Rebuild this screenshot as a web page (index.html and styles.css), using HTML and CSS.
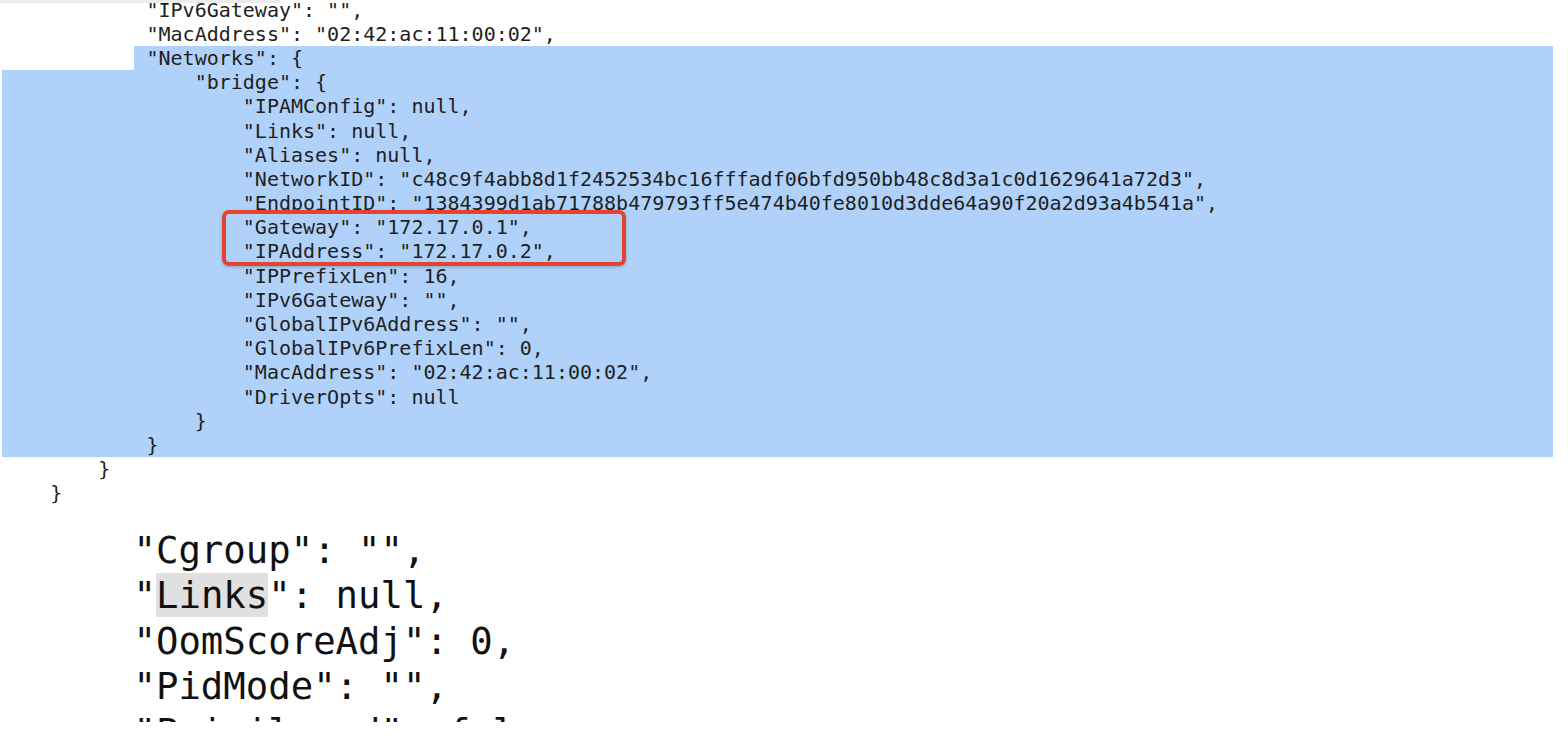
FILE: index.html
```html
<!DOCTYPE html>
<html>
<head>
<meta charset="utf-8">
<link rel="stylesheet" href="styles.css">
</head>
<body>
<div class="page">
  <div class="code-top">
    <div class="row">            "IPv6Gateway": "",</div>
    <div class="row">            "MacAddress": "02:42:ac:11:00:02",</div>
    <div class="row split"><span class="lead">           </span><span class="sel-rest"> "Networks": {</span></div>
    <div class="row sel">                "bridge": {</div>
    <div class="row sel">                    "IPAMConfig": null,</div>
    <div class="row sel">                    "Links": null,</div>
    <div class="row sel">                    "Aliases": null,</div>
    <div class="row sel">                    "NetworkID": "c48c9f4abb8d1f2452534bc16fffadf06bfd950bb48c8d3a1c0d1629641a72d3",</div>
    <div class="row sel">                    "EndpointID": "1384399d1ab71788b479793ff5e474b40fe8010d3dde64a90f20a2d93a4b541a",</div>
    <div class="row sel">                    "Gateway": "172.17.0.1",</div>
    <div class="row sel">                    "IPAddress": "172.17.0.2",</div>
    <div class="row sel">                    "IPPrefixLen": 16,</div>
    <div class="row sel">                    "IPv6Gateway": "",</div>
    <div class="row sel">                    "GlobalIPv6Address": "",</div>
    <div class="row sel">                    "GlobalIPv6PrefixLen": 0,</div>
    <div class="row sel">                    "MacAddress": "02:42:ac:11:00:02",</div>
    <div class="row sel">                    "DriverOpts": null</div>
    <div class="row sel">                }</div>
    <div class="row sel">            }</div>
    <div class="row">        }</div>
    <div class="row">    }</div>
    <div class="callout"></div>
  </div>
  <div class="code-bottom">
    <div class="big-row">"Cgroup": "",</div>
    <div class="big-row">"<span class="match">Links</span>": null,</div>
    <div class="big-row">"OomScoreAdj": 0,</div>
    <div class="big-row">"PidMode": "",</div>
    <div class="big-row">"Privileged": false,</div>
  </div>
</div>
</body>
</html>
```

FILE: styles.css
```css
html, body {
  margin: 0;
  padding: 0;
  background: #ffffff;
}

body {
  width: 1568px;
  height: 744px;
  overflow: hidden;
  position: relative;
}

body::before {
  content: "";
  position: absolute;
  left: 0;
  top: 0;
  width: 280px;
  height: 3px;
  background: #ececec;
}

.page {
  display: flex;
  flex-direction: column;
}

.code-top {
  position: relative;
  margin-top: -2.4px;
  margin-left: 2px;
  width: 1551px;
  font-family: "DejaVu Sans Mono", "Liberation Mono", monospace;
  font-size: 20px;
  color: #1f1f22;
}

.row {
  height: 24.2px;
  line-height: 24.2px;
  white-space: pre;
}

.row.sel {
  background: #b0d2fa;
}

.row.split {
  display: flex;
}

.lead {
  white-space: pre;
}

.sel-rest {
  flex: 1;
  white-space: pre;
  background: #b0d2fa;
}

.callout {
  position: absolute;
  left: 220px;
  top: 212.4px;
  width: 396px;
  height: 48px;
  border: 4px solid #e5422f;
  border-radius: 7px;
  box-shadow: 0 1px 3px rgba(0, 0, 0, 0.25);
}

.code-bottom {
  margin-top: 22px;
  padding-left: 133.5px;
  height: 194px;
  overflow: hidden;
  font-family: "DejaVu Sans Mono", "Liberation Mono", monospace;
  font-size: 37.3px;
  color: #111111;
}

.big-row {
  height: 45.5px;
  line-height: 45.5px;
  white-space: pre;
}

.match {
  background: #e0e0e0;
}
```
